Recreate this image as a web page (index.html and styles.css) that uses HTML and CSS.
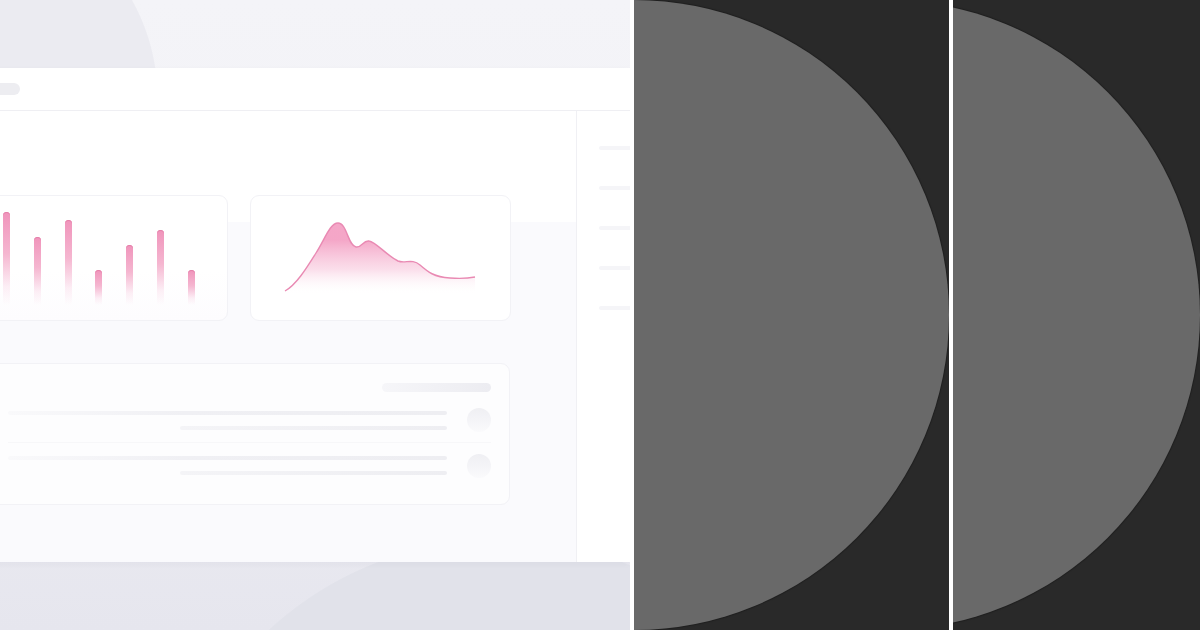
FILE: index.html
```html
<!DOCTYPE html>
<html>
<head>
<meta charset="utf-8">
<link rel="stylesheet" href="styles.css">
</head>
<body>
<div class="stage">
  <section class="hero">
    <div class="window">
      <div class="topbar"><span class="pill"></span></div>
      <div class="wbody">
        <div class="main">
          <div class="cards">
            <div class="card bars">
              <span class="bar" style="height:93px"></span>
              <span class="bar" style="height:68px"></span>
              <span class="bar" style="height:85px"></span>
              <span class="bar" style="height:35px"></span>
              <span class="bar" style="height:60px"></span>
              <span class="bar" style="height:75px"></span>
              <span class="bar" style="height:35px"></span>
            </div>
            <div class="card area">
              <svg width="261" height="126" viewBox="0 0 261 126">
                <defs>
                  <linearGradient id="af" x1="0" y1="0" x2="0" y2="1">
                    <stop offset="0.2" stop-color="#f39cc1" stop-opacity="0.9"/>
                    <stop offset="0.55" stop-color="#f7c2d9" stop-opacity="0.55"/>
                    <stop offset="0.85" stop-color="#fff" stop-opacity="0"/>
                  </linearGradient>
                </defs>
                <path d="M35,96 C46,90 56,74 66,58 C75,44 80,28 88,28 C97,28 98,51 106,52 C112,53 113,45 119,46 C126,47 136,60 148,66 C155,69 162,63 170,70 C178,77 184,82 200,83 C212,84 220,83 225,82 L225,112 L35,112 Z" fill="url(#af)"/>
                <path d="M35,96 C46,90 56,74 66,58 C75,44 80,28 88,28 C97,28 98,51 106,52 C112,53 113,45 119,46 C126,47 136,60 148,66 C155,69 162,63 170,70 C178,77 184,82 200,83 C212,84 220,83 225,82" fill="none" stroke="#e98ab3" stroke-width="1.4"/>
              </svg>
            </div>
          </div>
          <div class="card list">
            <div class="list-head"><span class="hpill"></span></div>
            <div class="row">
              <div class="lines"><span class="ln a"></span><span class="ln b"></span></div>
              <span class="dot"></span>
            </div>
            <div class="row">
              <div class="lines"><span class="ln a"></span><span class="ln b"></span></div>
              <span class="dot"></span>
            </div>
          </div>
        </div>
        <div class="side">
          <span class="sl"></span>
          <span class="sl"></span>
          <span class="sl"></span>
          <span class="sl"></span>
          <span class="sl"></span>
        </div>
      </div>
    </div>
  </section>
  <section class="dark mid"><div class="disc"></div></section>
  <section class="dark end"><div class="disc"></div></section>
</div>
</body>
</html>
```

FILE: styles.css
```css
* { box-sizing: border-box; }
html, body { margin: 0; padding: 0; }
body {
  width: 1200px;
  height: 630px;
  overflow: hidden;
  background: #ffffff;
  font-family: "Liberation Sans", Arial, sans-serif;
}
.stage {
  display: flex;
  gap: 4px;
  width: 1200px;
  height: 630px;
}

/* ---------- left hero ---------- */
.hero {
  flex: 0 0 630px;
  height: 630px;
  overflow: hidden;
  display: flex;
  justify-content: flex-end;
  align-items: flex-start;
  padding-top: 68px;
  background:
    radial-gradient(circle at -43px 98px, #ebebf1 0 200px, rgba(235,235,241,0) 201px),
    radial-gradient(circle at 500px 880px, #e1e2ea 0 340px, rgba(225,226,234,0) 341px),
    linear-gradient(to bottom, #f4f4f8 0, #f3f3f7 120px, #e6e6ee 100%);
}
.window {
  flex: 0 0 690px;
  width: 690px;
  min-width: 0;
  height: 494px;
  background: #fbfbfd;
  display: flex;
  flex-direction: column;
  box-shadow: 0 2px 6px rgba(40, 40, 80, 0.04);
}
.topbar {
  height: 43px;
  flex: 0 0 43px;
  background: #ffffff;
  border-bottom: 1px solid #efeff3;
  display: flex;
  align-items: center;
}
.pill {
  margin-left: 20px;
  width: 60px;
  height: 12px;
  border-radius: 6px;
  background: #ededf1;
}
.wbody {
  flex: 1;
  display: flex;
  min-height: 0;
  min-width: 0;
}
.main {
  flex: 0 0 637px;
  min-width: 0;
  padding: 84px 66px 0 27px;
  background: linear-gradient(to bottom, #ffffff 0, #ffffff 111px, #fafafd 111px);
  border-right: 1px solid #f0f0f4;
}
.side {
  flex: 1 1 0;
  min-width: 0;
  overflow: hidden;
  background: #ffffff;
  display: flex;
  flex-direction: column;
  gap: 36px;
  padding: 35px 0 0 22px;
}
.sl {
  display: block;
  flex: 0 0 4px;
  width: 60px;
  height: 4px;
  border-radius: 2px;
  background: #f5f5f8;
}

.cards {
  display: flex;
  gap: 22px;
}
.card {
  background: #ffffff;
  border: 1px solid #f2f2f6;
  border-radius: 9px;
}
.bars {
  flex: 0 0 261px;
  height: 126px;
  display: flex;
  align-items: flex-end;
  justify-content: space-between;
  padding: 0 32px 15px 35px;
  background: linear-gradient(to bottom, #ffffff 60%, #fdfcfe);
}
.bar {
  display: block;
  width: 7px;
  border-radius: 4px 4px 0 0;
  background: linear-gradient(to bottom, #f094bb 0, #f5b6d0 45%, rgba(250, 222, 235, 0.5) 80%, rgba(255, 255, 255, 0) 100%);
  box-shadow: inset 0 1px 0 0 #e480aa;
}
.area {
  flex: 0 0 261px;
  height: 126px;
  overflow: hidden;
}
.area svg { display: block; margin: -1px; }

.list {
  margin-top: 42px;
  height: 142px;
  background: #fdfdfe;
  padding: 19px 18px 0 40px;
}
.list-head {
  display: flex;
  justify-content: flex-end;
  height: 9px;
  margin-bottom: 6px;
}
.hpill {
  width: 109px;
  height: 9px;
  border-radius: 5px;
  background: linear-gradient(to right, #f6f6f9, #ececf1);
}
.row {
  height: 45px;
  display: flex;
  align-items: center;
  gap: 20px;
  border-bottom: 1px solid #f7f7f9;
}
.row:last-child { border-bottom: 0; }
.lines {
  flex: 1;
  display: flex;
  flex-direction: column;
  align-items: flex-end;
  gap: 11px;
}
.ln {
  display: block;
  height: 4px;
  border-radius: 2px;
}
.ln.a {
  width: 100%;
  background: linear-gradient(to right, rgba(240,240,244,0.3), #f0f0f4 40%, #eeeef2);
}
.ln.b {
  width: 267px;
  background: linear-gradient(to right, #f4f4f7, #eeeef2);
}
.dot {
  flex: 0 0 24px;
  width: 24px;
  height: 24px;
  border-radius: 50%;
  background: linear-gradient(to bottom, #efeff3, #fafafc);
}

/* ---------- dark panels ---------- */
.dark {
  height: 630px;
  overflow: hidden;
  background: #292929;
  display: flex;
  justify-content: flex-end;
  align-items: center;
}
.mid { flex: 0 0 315px; }
.end { flex: 1; }
.disc {
  flex: 0 0 630px;
  width: 630px;
  height: 630px;
  border-radius: 50%;
  background: #696969;
  box-shadow: 0 0 1px 1px rgba(0, 0, 0, 0.25);
}
```
